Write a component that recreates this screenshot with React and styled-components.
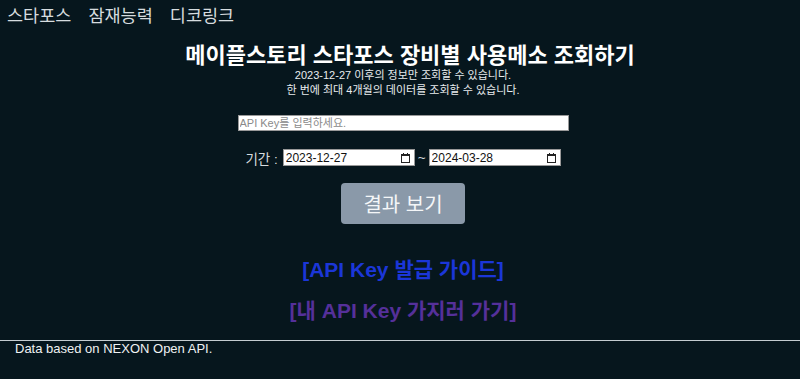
import React from "react";
import styled, { createGlobalStyle } from "styled-components";

const GlobalStyle = createGlobalStyle`
  html, body {
    margin: 0;
    padding: 0;
    background: #06161d;
    font-family: "Liberation Sans", "Noto Sans CJK KR", sans-serif;
  }
`;

const Page = styled.div`
  width: 800px;
  height: 379px;
  background: #06161d;
  display: flex;
  flex-direction: column;
  overflow: hidden;
`;

const Nav = styled.nav`
  height: 31px;
  display: flex;
  align-items: center;
  gap: 17px;
  padding-left: 7px;
`;

const NavItem = styled.a`
  color: #d6dcdf;
  font-size: 17.5px;
  line-height: 30px;
  text-decoration: none;
`;

const Main = styled.main`
  display: flex;
  flex-direction: column;
  align-items: center;
  padding-left: 6px;
`;

const Title = styled.h1`
  margin: 13px 0 0;
  color: #ffffff;
  font-size: 22px;
  font-weight: bold;
  line-height: 24px;
  padding-left: 14px;
`;

const Note = styled.p`
  margin: 0;
  color: #e8ecee;
  font-size: 11px;
  line-height: 15px;
`;

const KeyInput = styled.input`
  margin-top: 17px;
  width: 331px;
  height: 16px;
  box-sizing: border-box;
  border: 1px solid #999;
  padding: 0 1px;
  font-size: 11px;
  font-family: inherit;
  &::placeholder {
    color: #8a8a8a;
  }
`;

const DateRow = styled.div`
  margin-top: 18px;
  display: flex;
  align-items: center;
  gap: 3px;
  color: #d6dcdf;
  font-size: 13.5px;
  height: 17px;
`;

const Label = styled.span`
  margin-right: 2px;
`;

const DateField = styled.label`
  width: 132px;
  height: 17px;
  box-sizing: border-box;
  border: 1px solid #999;
  background: #fff;
  display: flex;
  align-items: center;
  padding: 0 4px 0 2px;
`;

const DateText = styled.input`
  flex: 1;
  min-width: 0;
  border: none;
  outline: none;
  padding: 0;
  font-size: 12px;
  font-family: "Liberation Sans", sans-serif;
  color: #111;
  background: transparent;
`;

const CalendarIcon = () => (
  <svg width="9" height="10" viewBox="0 0 9 10">
    <rect x="0.5" y="1.5" width="8" height="8" fill="none" stroke="#222" />
    <rect x="0" y="1" width="9" height="2" fill="#222" />
    <rect x="2" y="0" width="1" height="2" fill="#222" />
    <rect x="6" y="0" width="1" height="2" fill="#222" />
  </svg>
);

const Button = styled.button`
  margin-top: 17px;
  width: 124px;
  height: 41px;
  border: none;
  border-radius: 4px;
  background: #8a99a9;
  color: #f4f6f8;
  font-size: 20px;
  font-family: inherit;
`;

const GuideLink = styled.a`
  margin-top: ${props => props.gap}px;
  color: ${props => props.color};
  font-size: 21px;
  font-weight: bold;
  line-height: 24px;
  text-decoration: none;
`;

const Footer = styled.footer`
  margin-top: 17px;
  border-top: 1px solid #c4ccd0;
  padding-left: 15px;
  color: #f0f2f3;
  font-size: 13px;
  line-height: 16px;
`;

function DatePicker({ value }) {
  return (
    <DateField>
      <DateText defaultValue={value} />
      <CalendarIcon />
    </DateField>
  );
}

export default function App() {
  return (
    <Page>
      <GlobalStyle />
      <Nav>
        <NavItem href="#">스타포스</NavItem>
        <NavItem href="#">잠재능력</NavItem>
        <NavItem href="#">디코링크</NavItem>
      </Nav>
      <Main>
        <Title>메이플스토리 스타포스 장비별 사용메소 조회하기</Title>
        <Note>2023-12-27 이후의 정보만 조회할 수 있습니다.</Note>
        <Note>한 번에 최대 4개월의 데이터를 조회할 수 있습니다.</Note>
        <KeyInput placeholder="API Key를 입력하세요." />
        <DateRow>
          <Label>기간 :</Label>
          <DatePicker value="2023-12-27" />
          <span>~</span>
          <DatePicker value="2024-03-28" />
        </DateRow>
        <Button>결과 보기</Button>
        <GuideLink href="#" gap={34} color="#1b36d8">
          [API Key 발급 가이드]
        </GuideLink>
        <GuideLink href="#" gap={17} color="#55309a">
          [내 API Key 가지러 가기]
        </GuideLink>
      </Main>
      <Footer>Data based on NEXON Open API.</Footer>
    </Page>
  );
}
